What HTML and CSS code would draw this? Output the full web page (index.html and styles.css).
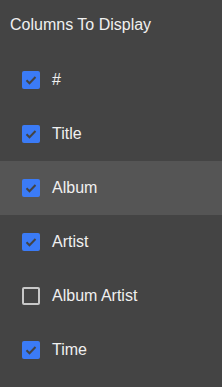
FILE: index.html
```html
<!DOCTYPE html>
<html lang="en">
<head>
    <meta charset="UTF-8">
    <meta name="viewport" content="width=device-width, initial-scale=1.0">
    <title>Columns To Display</title>
    <link rel="stylesheet" href="styles.css">
</head>
<body>
    <div class="panel">
        <div class="panel-title">Columns To Display</div>
        <ul class="column-list">
            <li class="column-row"><span class="box checked"><svg viewBox="0 0 18 18"><path d="M4.5 9.2l3 3 6-6.2"/></svg></span><span class="label">#</span></li>
            <li class="column-row"><span class="box checked"><svg viewBox="0 0 18 18"><path d="M4.5 9.2l3 3 6-6.2"/></svg></span><span class="label">Title</span></li>
            <li class="column-row hover"><span class="box checked"><svg viewBox="0 0 18 18"><path d="M4.5 9.2l3 3 6-6.2"/></svg></span><span class="label">Album</span></li>
            <li class="column-row"><span class="box checked"><svg viewBox="0 0 18 18"><path d="M4.5 9.2l3 3 6-6.2"/></svg></span><span class="label">Artist</span></li>
            <li class="column-row"><span class="box"></span><span class="label">Album Artist</span></li>
            <li class="column-row"><span class="box checked"><svg viewBox="0 0 18 18"><path d="M4.5 9.2l3 3 6-6.2"/></svg></span><span class="label">Time</span></li>
        </ul>
    </div>
</body>
</html>
```

FILE: styles.css
```css
body {
    margin: 0;
    padding: 0;
    background: #444444;
    font-family: 'Liberation Sans', Arial, sans-serif;
    color: #f0f0f0;
}

.panel {
    width: 222px;
    height: 387px;
    background: #444444;
}

.panel-title {
    font-size: 16px;
    line-height: 18px;
    padding: 16px 10px 0;
    height: 37px;
}

.column-list {
    list-style: none;
    margin: 0;
    padding: 0;
}

.column-row {
    display: flex;
    align-items: center;
    height: 54px;
    padding-left: 22px;
    font-size: 16px;
}

.column-row.hover {
    background: #555555;
}

.box {
    width: 18px;
    height: 18px;
    box-sizing: border-box;
    border: 2px solid #c8c8c8;
    border-radius: 2px;
    margin-right: 12px;
    flex-shrink: 0;
}

.box.checked {
    border: none;
    background: #3b7bf6;
}

.box svg {
    display: block;
    width: 18px;
    height: 18px;
    fill: none;
    stroke: #444444;
    stroke-width: 2;
}

.label {
    line-height: 18px;
}
```
